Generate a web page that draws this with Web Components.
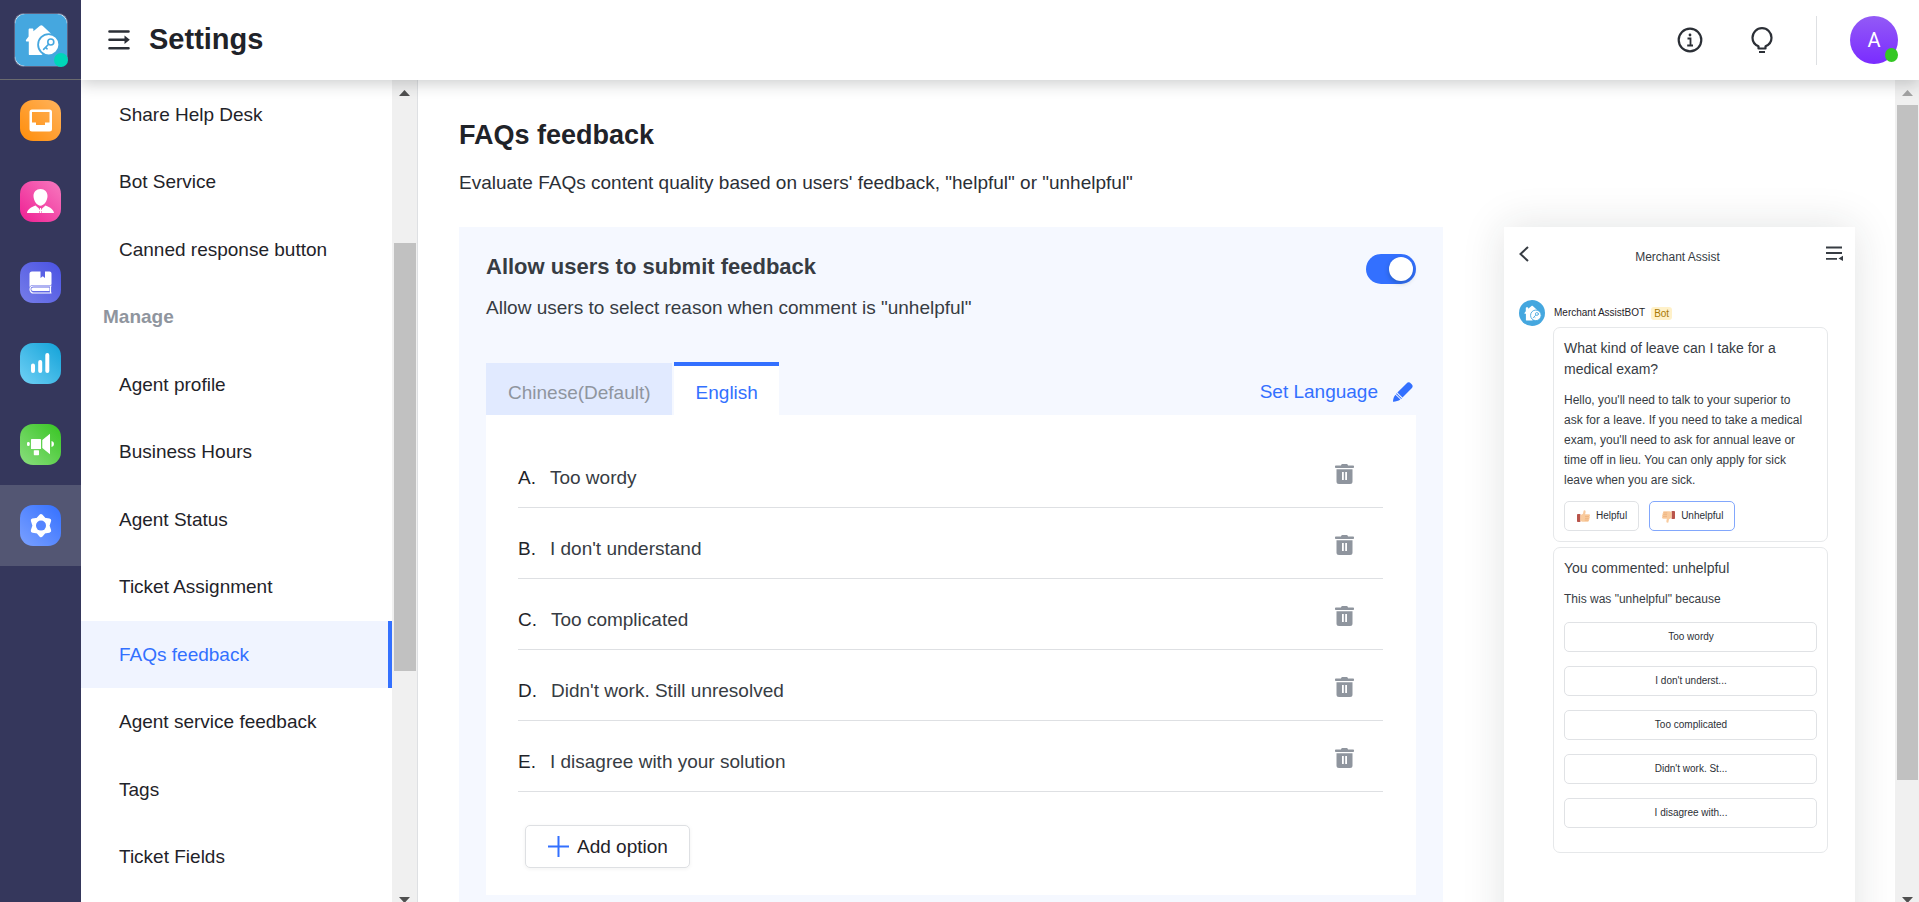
<!DOCTYPE html>
<html lang="en">
<head>
<meta charset="utf-8">
<title>Settings</title>
<style>
  html, body {
    margin: 0;
    height: 100%;
    overflow: hidden;
  }
  body {
    font-family: "Liberation Sans", Arial, sans-serif;
    font-size: 19px;
    line-height: 28px;
    color: #1f2329;
    background: #fff;
  }
</style>
</head>
<body>
<settings-app></settings-app>

<script>
const define = (name, template) => {
  customElements.define(name, class extends HTMLElement {
    constructor() {
      super();
      const html = typeof template === 'function' ? template(this) : template;
      this.attachShadow({ mode: 'open' });
      this.shadowRoot.innerHTML = html;
    }
  });
};

const HouseKey = `
  <path fill="#fff" d="M13.6 22.600v-6.800c0-.9.500-1.400 1.400-1.400h2.200c.8 0 1.200.5 1.200 1.300v1.600l6.600-5.500c.9-.7 1.800-.7 2.600 0L39 22.600l-5 12.900-7.500 5.600H14.600c-.5 0-.8-.4-.8-.9V27.600h-1.600c-1.300 0-1.800-1.200-.9-2.100z"/>
  <circle cx="33.700" cy="30.700" r="10.600" fill="#fff" stroke="#45a7df" stroke-width="1.800"/>
  <g fill="none" stroke="#45a7df" stroke-width="1.600" stroke-linecap="round">
    <circle cx="35.800" cy="28" r="3"/>
    <path d="M33.600 30.200l-5 5.200M30.600 33.400l1.500 1.400"/>
  </g>
`;

/* left rail */

const railItems = [
  {
    label: 'Inbox', from: '#ff8d0a', to: '#ffb35c',
    icon: '<path fill="#fff" fill-rule="evenodd" d="M12 9.500h17.500a2.500 2.500 0 0 1 2.500 2.500v17a2.500 2.500 0 0 1-2.500 2.500H12A2.500 2.500 0 0 1 9.500 29V12A2.500 2.500 0 0 1 12 9.500zM12 12v10.500h4V25h9v-2.500h4.500V12z"/>',
  },
  {
    label: 'Customers', from: '#ef1f93', to: '#f77abf',
    icon: '<path fill="#fff" d="M20.500 8c4.300 0 7 2.900 7 7 0 4.800-3.600 9.700-7 9.700s-7-4.900-7-9.700c0-4.100 2.700-7 7-7zM7 32c.3-3.400 3.600-5.500 8.500-7.500l4 3.500v4zM34 32c-.3-3.400-3.600-5.500-8.500-7.500l-4 3.500v4z"/><path stroke="#fff" stroke-width="1" d="M17.500 29.500h6M20.500 27v5"/>',
  },
  {
    label: 'Knowledge base', from: '#767de9', to: '#4a52e2',
    icon: '<path fill="#fff" d="M12 9.500h8.500V16l2.300-1.800L25 16V9.500h4.500a2 2 0 0 1 2 2V22a1 1 0 0 1-1 1H13c-1.500 0-2.700.8-3.500 2V12a2.500 2.500 0 0 1 2.500-2.500z"/><path fill="none" stroke="#fff" stroke-width="1.200" d="M31.500 24H13.500a3.500 3.500 0 0 0 0 7h18M30.500 24v7"/><path fill="#fff" d="M13 25.500h16.500v3.500H13a1.700 1.700 0 0 1 0-3.500z"/>',
  },
  {
    label: 'Reports', from: '#70d0f5', to: '#12a2d8',
    icon: '<g stroke="#fff" stroke-width="4" stroke-linecap="round"><path d="M13 22.500V28M20.200 19v9M27.300 12v16"/></g>',
  },
  {
    label: 'Campaigns', from: '#8bde7f', to: '#37c522',
    icon: '<g fill="#fff"><rect x="7" y="18" width="2.700" height="4" rx="1.200"/><rect x="11" y="15" width="10" height="10" rx=".6"/><rect x="13.800" y="26.200" width="5.200" height="5" rx=".6"/><path d="M22.300 16l7.700-6.300v20.600L22.300 24zM31.500 17c3.300.6 3.300 5.400 0 6z"/></g>',
  },
  {
    label: 'Settings', from: '#7ba1ff', to: '#3470ff', active: true,
    icon: '<path fill="#fff" stroke="#fff" stroke-width="4" stroke-linejoin="round" d="M21 11l3.200 3.600 5 .8-1.700 5.100 1.700 5.200-5 .8L21 30.200l-3.200-3.700-5-.8 1.700-5.200-1.700-5.100 5-.8z"/><circle cx="21" cy="20.600" r="5" fill="#5584ff"/>',
  },
];

const RailItem = (accumulator, item, i) => accumulator + `
  <a href="#${item.label.toLowerCase().replace(' ', '-')}" class="${item.active ? 'active' : ''}" aria-label="${item.label}">
    <svg width="41" height="41" viewBox="0 0 41 41">
      <defs>
        <linearGradient id="g${i}" x1="0" y1="1" x2="1" y2="0">
          <stop offset="0" stop-color="${item.from}"/>
          <stop offset="1" stop-color="${item.to}"/>
        </linearGradient>
      </defs>
      <rect width="41" height="41" rx="13" fill="url(#g${i})"/>
      ${item.icon}
    </svg>
  </a>
`;

define('app-rail', `
  <style>
    :host {
      display: block;
      flex: none;
      width: 81px;
      background: #35375c;
      position: relative;
      z-index: 2;
    }
    .logo {
      display: flex;
      height: 79px;
      align-items: center;
      justify-content: center;
      border-bottom: 1px solid #6a6a6e;
    }
    a {
      display: flex;
      height: 81px;
      align-items: center;
      justify-content: center;
    }
    a.active { background: #535673; }
  </style>
  <div class="logo">
    <svg width="54" height="54" viewBox="-1 -1 54 54" role="img" aria-label="Merchant Assist">
      <rect x="-.5" y="-.5" width="53" height="53" rx="9" fill="#dfeef8" stroke="#5d6080"/>
      <rect width="52" height="52" rx="10" fill="#45a7df"/>
      ${HouseKey}
      <circle cx="46" cy="46" r="7" fill="#00d6b9"/>
    </svg>
  </div>
  <nav aria-label="Main">${railItems.reduce(RailItem, '')}</nav>
`);

/* top bar */

define('app-header', `
  <style>
    :host {
      display: flex;
      flex: none;
      align-items: center;
      height: 80px;
      box-sizing: border-box;
      padding: 0 21px 0 27px;
      background: #fff;
      box-shadow: 0 4px 14px rgba(31, 35, 41, .22);
      position: relative;
      z-index: 1;
    }
    h1 {
      flex: 1;
      margin: 0 0 2px 19px;
      font-size: 29px;
      line-height: 40px;
    }
    button {
      display: flex;
      padding: 0;
      border: 0;
      background: none;
      color: #2b2f36;
    }
    .actions { display: flex; align-items: center; }
    .bulb { margin-left: 48px; }
    .line { width: 1px; height: 49px; margin: 0 33px 0 43px; background: #dee0e3; }
    .avatar {
      position: relative;
      justify-content: center;
      width: 48px;
      height: 48px;
      border-radius: 50%;
      background: linear-gradient(#935af6, #7a2cff);
      color: #fff;
      font: 20px/48px Roboto, sans-serif;
    }
    .avatar i {
      position: absolute;
      right: 0;
      bottom: 2px;
      width: 13px;
      height: 14px;
      border-radius: 50%;
      background: #34c724;
    }
  </style>
  <button aria-label="Expand menu">
    <svg width="22" height="20" viewBox="0 0 22 20">
      <g stroke="currentColor" stroke-width="2.600" stroke-linecap="round"><path d="M1.500 1.500h19M1.500 9.800h17M1.500 18.300h19"/></g>
      <path fill="currentColor" d="M16.500 5.500l5.300 4.300-5.300 4.300z"/>
    </svg>
  </button>
  <h1>Settings</h1>
  <div class="actions">
    <button aria-label="Information">
      <svg width="26" height="26" viewBox="0 0 26 26">
        <circle cx="13" cy="13" r="11.300" fill="none" stroke="currentColor" stroke-width="2.200"/>
        <circle cx="13" cy="8" r="1.400" fill="currentColor"/>
        <path d="M10.500 11.500h3V18M10.200 18.500h5.800" fill="none" stroke="currentColor" stroke-width="1.800"/>
      </svg>
    </button>
    <button class="bulb" aria-label="Tips">
      <svg width="22" height="26" viewBox="0 0 22 26">
        <path d="M7.500 21.500v-2.200c-3-1.300-6-4.300-6-8.600a9.400 9.400 0 0 1 19 0c0 4.300-3 7.300-6 8.600v2.200z" fill="none" stroke="currentColor" stroke-width="2.200" stroke-linejoin="round"/>
        <path d="M8 25h6" stroke="currentColor" stroke-width="2"/>
      </svg>
    </button>
    <span class="line"></span>
    <button class="avatar">A<i></i></button>
  </div>
`);

/* scroll bar: before / thumb / after are shares of the track */

define('scroll-bar', el => `
  <style>
    :host {
      display: flex;
      flex: none;
      flex-direction: column;
      width: 24px;
      background: #f0f0f0;
    }
    .arrow {
      display: flex;
      flex: none;
      height: 25px;
      align-items: center;
      justify-content: center;
      color: #505050;
    }
    .arrow.off { color: #a3a3a3; }
    .thumb { margin: 0 1px 0 2px; background: #c1c1c1; }
  </style>
  <div class="arrow ${el.getAttribute('before') === '0' ? 'off' : ''}"><svg width="11" height="6"><path fill="currentColor" d="M0 6L5.500 0 11 6z"/></svg></div>
  <div style="flex:${el.getAttribute('before')} 0 0"></div>
  <div class="thumb" style="flex:${el.getAttribute('thumb')} 0 0"></div>
  <div style="flex:${el.getAttribute('after')} 0 0"></div>
  <div class="arrow"><svg width="11" height="6"><path fill="currentColor" d="M0 0h11L5.500 6z"/></svg></div>
`);

/* settings menu */

const menu = [
  'Share Help Desk',
  'Bot Service',
  'Canned response button',
  { group: 'Manage' },
  'Agent profile',
  'Business Hours',
  'Agent Status',
  'Ticket Assignment',
  'FAQs feedback',
  'Agent service feedback',
  'Tags',
  'Ticket Fields',
];

const MenuItem = (accumulator, item) => accumulator + (item.group
  ? `<li class="group">${item.group}</li>`
  : `<li><a href="#${item.toLowerCase().replace(/ /g, '-')}" ${item === 'FAQs feedback' ? 'aria-current="page"' : ''}>${item}</a></li>`);

define('side-menu', `
  <style>
    :host {
      display: flex;
      flex: none;
      width: 336px;
      border-right: 1px solid #dee0e3;
    }
    nav { flex: 1; overflow: hidden; }
    scroll-bar { width: 25px; }
    ul {
      display: grid;
      grid-auto-rows: 67px 68px;
      margin: 0;
      padding: 1px 0 0;
      list-style: none;
    }
    li { display: flex; }
    a, .group { align-items: center; color: inherit; text-decoration: none; }
    a { display: flex; flex: 1; padding: 0 34px 0 38px; border-right: 4px solid transparent; }
    .group { padding-left: 22px; color: #8f959e; font-weight: bold; }
    a[aria-current] {
      color: #3370ff;
      background: #f0f4ff;
      border-color: #3370ff;
    }
  </style>
  <nav aria-label="Settings"><ul>${menu.reduce(MenuItem, '')}</ul></nav>
  <scroll-bar before="138" thumb="428" after="216"></scroll-bar>
`);

/* feedback form */

define('option-row', `
  <style>
    :host {
      display: flex;
      align-items: flex-start;
      padding: 27px 29px 15px 0;
      border-bottom: 1px solid #dee0e3;
    }
    .text { flex: 1; margin-left: 14px; color: #373c43; }
    button { display: flex; padding: 0; border: 0; background: none; color: #8f959e; }
  </style>
  <slot name="letter"></slot>
  <span class="text"><slot></slot></span>
  <button aria-label="Delete">
    <svg width="19" height="20" viewBox="0 0 19 20">
      <path fill="currentColor" d="M6 1.500C6 .6 6.700 0 7.600 0h3.800c.9 0 1.600.6 1.600 1.500h5.200c.5 0 .8.300.8.800v.9c0 .5-.3.800-.8.800H.8c-.5 0-.8-.3-.8-.8v-.9c0-.5.3-.8.800-.8z"/>
      <path fill="currentColor" fill-rule="evenodd" d="M1.500 5.300h16v12.200a2.500 2.500 0 0 1-2.500 2.500H4a2.500 2.500 0 0 1-2.500-2.500zM7 8v8h1.800V8zm3.200 0v8H12V8z"/>
    </svg>
  </button>
`);

define('toggle-switch', `
  <style>
    :host { display: block; flex: none; }
    input {
      appearance: none;
      display: block;
      box-sizing: border-box;
      width: 50px;
      height: 30px;
      margin: 0;
      padding: 3px;
      border-radius: 15px;
      background: #bbbfc4;
    }
    input:checked { background: #3370ff; }
    input::before {
      content: "";
      display: block;
      width: 24px;
      height: 24px;
      border-radius: 50%;
      background: #fff;
      box-shadow: 0 2px 5px rgba(0, 35, 11, .25);
    }
    input:checked::before { margin-left: 20px; }
  </style>
  <input type="checkbox" role="switch" aria-label="Allow users to submit feedback" checked>
`);

const options = [
  'Too wordy',
  "I don't understand",
  'Too complicated',
  "Didn't work. Still unresolved",
  'I disagree with your solution',
];

const OptionRow = (accumulator, text, i) => accumulator + `
  <option-row><span slot="letter">${'ABCDE'[i]}.</span>${text}</option-row>
`;

define('feedback-form', `
  <style>
    :host {
      display: block;
      padding: 25px 27px 32px;
      background: #f5f8ff;
    }
    header { display: flex; align-items: flex-start; justify-content: space-between; }
    h3 { margin: 0 0 12px; font-size: 22px; line-height: 30px; color: #373c43; }
    p { margin: 0; color: #373c43; }
    toggle-switch { margin-top: 2px; }
    .bar { display: flex; align-items: flex-end; margin-top: 40px; }
    button { font: inherit; border: 0; }
    .tab { padding: 16px 21px 8px 22px; margin-right: 2px; background: #e1eaff; color: #8f959e; }
    .tab[aria-selected=true] {
      padding-top: 13px;
      border-top: 4px solid #3370ff;
      background: #fff;
      color: #3370ff;
    }
    .language {
      display: flex;
      align-items: center;
      gap: 15px;
      margin-left: auto;
      padding: 0 3px 9px 0;
      color: #3370ff;
      text-decoration: none;
    }
    .panel { padding: 22px 33px 27px 32px; background: #fff; }
    .add {
      display: flex;
      align-items: center;
      gap: 8px;
      height: 43px;
      margin: 33px 0 0 7px;
      padding: 0 21px 0 22px;
      border: 1px solid #dee0e3;
      border-radius: 5px;
      background: #fff;
      color: #1f2329;
      box-shadow: 0 1px 4px rgba(31, 35, 41, .06);
    }
  </style>
  <header>
    <div>
      <h3>Allow users to submit feedback</h3>
      <p>Allow users to select reason when comment is "unhelpful"</p>
    </div>
    <toggle-switch></toggle-switch>
  </header>
  <div class="bar" role="tablist">
    <button class="tab" role="tab" aria-selected="false">Chinese(Default)</button>
    <button class="tab" role="tab" aria-selected="true">English</button>
    <a class="language" href="#language">Set Language
      <svg width="20" height="20" viewBox="0 0 20 20" fill="currentColor">
        <path d="M13.500 1.400c1.400-1.400 3-1.400 4.400 0l.8.800c1.300 1.300 1.300 2.800 0 4.100L9.500 15.500l-5.100-5z"/>
        <path d="M3.700 11.300l5.200 5.100-.7.700L3 12zM2.400 12.700l5 4.900C5.500 19.200 2.600 19.600.5 19.700c-.4 0-.6-.2-.5-.6.200-2.200.8-4.700 2.400-6.400z"/>
      </svg>
    </a>
  </div>
  <div class="panel" role="tabpanel">
    ${options.reduce(OptionRow, '')}
    <button class="add">
      <svg width="21" height="21" viewBox="0 0 21 21"><path stroke="#3370ff" stroke-width="2" d="M0 10.500h21M10.500 0v21"/></svg>
      Add option
    </button>
  </div>
`);

/* chat preview */

const Thumb = (down = false) => `
  <svg width="13" height="13" viewBox="0 0 13 13" ${down ? 'style="transform:rotate(180deg)"' : ''}>
    <rect y="4" width="3.500" height="8" rx=".8" fill="#b8544b"/>
    <path d="M3.300 5.200L6 3.800 6.600.8c.2-.9 1.900-.8 2 .6.100 1-.2 2-.5 2.900h3.700c1.400 0 1.500 1.700.7 2.100.7.500.5 1.600-.2 1.900.5.600.3 1.500-.4 1.800.3.800-.2 1.600-1.100 1.600H5.500l-2.200-.6z" fill="#f9cb9e"/>
    <path d="M8 6.400h4M8 8.300h3.800M7.800 10.100h3.500" stroke="#e5a067" stroke-width=".5"/>
  </svg>
`;

const ReplyButton = (accumulator, text) => accumulator + `
  <button>${text}</button>
`;

define('chat-card', `
  <style>
    :host {
      display: block;
      margin: 0 27px 5px 49px;
      padding: 10px;
      border: 1px solid #e6e8ea;
      border-radius: 7px;
      color: #373c43;
      font-size: 12px;
      line-height: 20px;
    }
    ::slotted(h4) { margin: 0 0 10px !important; font-size: 14px; font-weight: normal; line-height: 21px; }
    ::slotted(p) { margin: 0 12px 11px 0 !important; }
  </style>
  <slot></slot>
`);

define('chat-preview', `
  <style>
    :host {
      display: block;
      flex: none;
      width: 351px;
      padding-bottom: 100px;
      background: #fff;
      box-shadow: 0 0 40px rgba(31, 35, 41, .13);
      font-size: 12px;
      line-height: 20px;
    }
    header {
      display: flex;
      align-items: flex-start;
      justify-content: space-between;
      padding: 19px 11px 0 15px;
      color: #373c43;
    }
    header span { margin-top: 1px; }
    .bot { display: flex; align-items: center; margin: 33px 0 1px 15px; font-size: 10px; }
    .bot svg { margin-right: 9px; }
    mark { margin-left: 6px; padding: 0 3px; border-radius: 3px; background: #fff1c9; color: #a87803; line-height: 13px; }
    button {
      display: flex;
      align-items: center;
      justify-content: center;
      gap: 6px;
      height: 30px;
      padding: 0 11px 0 12px;
      border: 1px solid #e0e2e5;
      border-radius: 5px;
      background: #fff;
      color: #2b2f36;
      font: inherit;
      font-size: 10px;
    }
    .votes { display: flex; gap: 10px; }
    .votes .picked { border-color: #82a7fc; }
    .replies { display: grid; gap: 14px; padding: 2px 0 14px; }
  </style>
  <header>
    <svg width="10" height="16" viewBox="0 0 10 16"><path fill="none" stroke="#373c43" stroke-width="2" d="M9 1L1.500 8 9 15"/></svg>
    <span>Merchant Assist</span>
    <svg width="18" height="15" viewBox="0 0 18 15">
      <path stroke="#373c43" stroke-width="1.800" d="M0 1.500h16M0 7h16M0 12.800h11"/>
      <path fill="#373c43" d="M12.500 12.500l4.500-2.800v5.300z"/>
    </svg>
  </header>
  <div class="bot">
    <svg width="26" height="26" viewBox="0 0 52 52"><circle cx="26" cy="26" r="26" fill="#45a7df"/>${HouseKey}</svg>
    Merchant AssistBOT <mark>Bot</mark>
  </div>
  <chat-card>
    <h4>What kind of leave can I take for a medical exam?</h4>
    <p>Hello, you'll need to talk to your superior to ask for a leave. If you need to take a medical exam, you'll need to ask for annual leave or time off in lieu. You can only apply for sick leave when you are sick.</p>
    <div class="votes">
      <button>${Thumb()}Helpful</button>
      <button class="picked">${Thumb(true)}Unhelpful</button>
    </div>
  </chat-card>
  <chat-card>
    <h4>You commented: unhelpful</h4>
    <p>This was "unhelpful" because</p>
    <div class="replies">
      ${['Too wordy', "I don't underst...", 'Too complicated', "Didn't work. St...", 'I disagree with...'].reduce(ReplyButton, '')}
    </div>
  </chat-card>
`);

/* page */

define('settings-app', `
  <style>
    :host { display: flex; height: calc(100vh + 10px); }
    .right { display: flex; flex: 1; flex-direction: column; min-width: 0; }
    .body { display: flex; flex: 1; min-height: 0; }
    main { flex: 1; min-width: 0; padding: 37px 40px 0 41px; overflow: hidden; }
    h2 { margin: 0 0 16px; font-size: 27px; line-height: 36px; }
    p { margin: 0 0 30px; color: #2b2f36; }
    .columns { display: flex; gap: 61px; align-items: flex-start; }
    feedback-form { flex: 1; min-width: 0; }
  </style>
  <app-rail></app-rail>
  <div class="right">
    <app-header></app-header>
    <div class="body">
      <side-menu></side-menu>
      <main>
        <h2>FAQs feedback</h2>
        <p>Evaluate FAQs content quality based on users' feedback, "helpful" or "unhelpful"</p>
        <div class="columns">
          <feedback-form></feedback-form>
          <chat-preview></chat-preview>
        </div>
      </main>
      <scroll-bar before="0" thumb="675" after="107"></scroll-bar>
    </div>
  </div>
`);
</script>
</body>
</html>
